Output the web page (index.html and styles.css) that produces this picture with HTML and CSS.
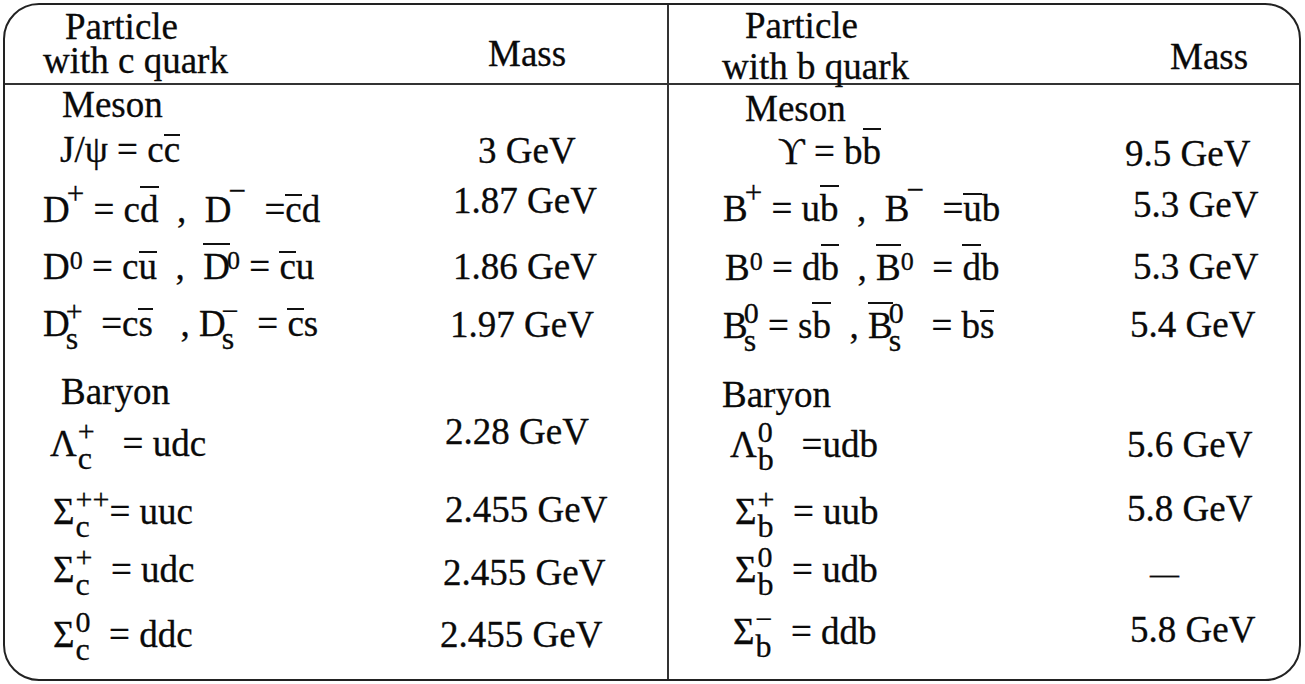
FILE: index.html
```html
<!DOCTYPE html>
<html>
<head>
<meta charset="utf-8">
<link rel="stylesheet" href="styles.css">
</head>
<body>
<div class="table">
  <section class="half left">
    <div class="head">
      <div class="hname"><span class="l1">Particle</span><span class="l2">with c quark</span></div>
      <div class="hmass">Mass</div>
    </div>
    <div class="body">
      <div class="row r0"><div class="f">Meson</div></div>
      <div class="row r1"><div class="f">J/ψ = c<span class="bar">c</span></div><div class="m">3 GeV</div></div>
      <div class="row r2"><div class="f">D<span class="sp">+</span> = c<span class="bar tall">d</span>&ensp;,&ensp;D<span class="sm">−</span>&ensp;=<span class="bar">c</span>d</div><div class="m">1.87 GeV</div></div>
      <div class="row r3"><div class="f">D<span class="s0">0</span> = c<span class="bar">u</span>&ensp;,&ensp;<span class="bar tall">D</span><span class="s0 tight">0</span> = <span class="bar">c</span>u</div><div class="m">1.86 GeV</div></div>
      <div class="row r4"><div class="f">D<span class="ss"><span class="up">+</span><span class="dn">s</span></span>&ensp;=c<span class="bar">s</span>&ensp;&nbsp;, D<span class="ss"><span class="up">−</span><span class="dn">s</span></span>&ensp;= <span class="bar">c</span>s</div><div class="m">1.97 GeV</div></div>
      <div class="row r5"><div class="f">Baryon</div></div>
      <div class="row r6"><div class="f">Λ<span class="ss greek"><span class="up">+</span><span class="dn">c</span></span>&ensp; = udc</div><div class="m">2.28 GeV</div></div>
      <div class="row r7"><div class="f">Σ<span class="ss greek"><span class="up">++</span><span class="dn">c</span></span>= uuc</div><div class="m">2.455 GeV</div></div>
      <div class="row r8"><div class="f">Σ<span class="ss greek"><span class="up">+</span><span class="dn">c</span></span>&ensp;= udc</div><div class="m">2.455 GeV</div></div>
      <div class="row r9"><div class="f">Σ<span class="ss greek"><span class="up">0</span><span class="dn">c</span></span>&ensp;= ddc</div><div class="m">2.455 GeV</div></div>
    </div>
  </section>
  <section class="half right">
    <div class="head">
      <div class="hname"><span class="l1">Particle</span><span class="l2">with b quark</span></div>
      <div class="hmass">Mass</div>
    </div>
    <div class="body">
      <div class="row r0"><div class="f">Meson</div></div>
      <div class="row r1"><div class="f">ϒ = b<span class="bar tall">b</span></div><div class="m">9.5 GeV</div></div>
      <div class="row r2"><div class="f">B<span class="sp">+</span> = u<span class="bar tall">b</span>&ensp;,&ensp;B<span class="sm">−</span>&ensp;=<span class="bar">u</span>b</div><div class="m">5.3 GeV</div></div>
      <div class="row r3"><div class="f">B<span class="s0">0</span> = d<span class="bar tall">b</span>&ensp;, <span class="bar tall">B</span><span class="s0">0</span>&ensp;= <span class="bar tall">d</span>b</div><div class="m">5.3 GeV</div></div>
      <div class="row r4"><div class="f">B<span class="ss"><span class="up">0</span><span class="dn">s</span></span> = s<span class="bar tall">b</span>&ensp;, <span class="bar tall">B</span><span class="ss"><span class="up">0</span><span class="dn">s</span></span>&ensp; = b<span class="bar">s</span></div><div class="m">5.4 GeV</div></div>
      <div class="row r5"><div class="f">Baryon</div></div>
      <div class="row r6"><div class="f">Λ<span class="ss greek"><span class="up">0</span><span class="dn">b</span></span>&ensp; =udb</div><div class="m">5.6 GeV</div></div>
      <div class="row r7"><div class="f">Σ<span class="ss greek"><span class="up">+</span><span class="dn">b</span></span>&ensp;= uub</div><div class="m">5.8 GeV</div></div>
      <div class="row r8"><div class="f">Σ<span class="ss greek"><span class="up">0</span><span class="dn">b</span></span>&ensp;= udb</div><div class="m dash">—</div></div>
      <div class="row r9"><div class="f">Σ<span class="ss greek"><span class="up">−</span><span class="dn">b</span></span>&ensp;= ddb</div><div class="m">5.8 GeV</div></div>
    </div>
  </section>
</div>
</body>
</html>
```

FILE: styles.css
```css
* { box-sizing: border-box; margin: 0; padding: 0; }
html, body { background: #fff; }
body {
  margin: 0;
  font-family: "Liberation Serif", "Times New Roman", serif;
  font-size: 37px;
  color: #0a0a0a;
  -webkit-text-stroke: 0.3px #0a0a0a;
}
.table {
  margin: 3px;
  width: 1298px;
  height: 678px;
  border: 2px solid #222;
  border-radius: 36px;
  display: grid;
  grid-template-columns: 664px 630px;
  overflow: hidden;
}
.half { display: flex; flex-direction: column; }
.left { border-right: 2px solid #333; }

.head {
  height: 80px;
  border-bottom: 2px solid #333;
  display: flex;
  flex: 0 0 auto;
}
.hname { flex: 0 0 400px; display: flex; flex-direction: column; }
.l1, .l2 { display: block; white-space: nowrap; }
.hmass { line-height: 34px; }
.left .hname { padding: 5px 0 0 38px; line-height: 34px; }
.left .l1 { padding-left: 22px; }
.left .hmass { padding: 32px 0 0 83px; }
.right .hname { padding: 0 0 0 53px; line-height: 41px; }
.right .l1 { padding-left: 23px; }
.right .hmass { padding: 35px 0 0 101px; }

.body { display: flex; flex-direction: column; }
.left .body { padding-top: 2px; }
.right .body { padding-top: 6px; }
.row { display: flex; align-items: flex-start; line-height: 36px; flex: 0 0 auto; white-space: nowrap; }
.f { flex: 0 0 400px; padding-left: var(--fx, 38px); }
.m { padding-left: var(--mx, 40px); margin-top: var(--my, 0px); }
.m.dash { font-size: 29px; }

/* left column rows (height = distance to next baseline) */
.left .r0 { height: 45px; --fx: 57px; }
.left .r1 { height: 59px; --fx: 55px; --mx: 73px; --my: 1px; }
.left .r2 { height: 58px; --fx: 38px; --mx: 48px; --my: -8px; }
.left .r3 { height: 57px; --fx: 38px; --mx: 48px; }
.left .r4 { height: 68px; --fx: 38px; --mx: 45px; --my: 1px; }
.left .r5 { height: 52px; --fx: 56px; }
.left .r6 { height: 68px; --fx: 45px; --mx: 40px; --my: -12px; }
.left .r7 { height: 58px; --fx: 48px; --mx: 40px; --my: -2px; }
.left .r8 { height: 65px; --fx: 48px; --mx: 38px; --my: 3px; }
.left .r9 { height: 40px; --fx: 48px; --mx: 35px; }

/* right column rows */
.right .r0 { height: 43px; --fx: 76px; }
.right .r1 { height: 56px; --fx: 109px; --mx: 56px; --my: 2px; }
.right .r2 { height: 60px; --fx: 54px; --mx: 64px; --my: -3px; }
.right .r3 { height: 58px; --fx: 56px; --mx: 64px; --my: -1px; }
.right .r4 { height: 69px; --fx: 54px; --mx: 61px; --my: -1px; }
.right .r5 { height: 50px; --fx: 53px; }
.right .r6 { height: 67px; --fx: 61px; --mx: 58px; }
.right .r7 { height: 58px; --fx: 66px; --mx: 58px; --my: -3px; }
.right .r8 { height: 62px; --fx: 66px; --mx: 81px; --my: 4px; }
.right .r9 { height: 40px; --fx: 64px; --mx: 61px; --my: -2px; }

/* overlined quark symbols */
.bar {
  display: inline-block;
  line-height: 28px;
  border-top: 2px solid #111;
}
.bar.tall {
  line-height: 44px;
  margin-top: -8px;
  margin-bottom: -6px;
}

/* single superscripts */
.sp, .sm { font-size: 31px; line-height: 0; }
.s0 { font-size: 26px; line-height: 0; }
.sp { vertical-align: 18px; margin-left: -3px; }
.sm { vertical-align: 21px; margin-left: -3px; }
.s0 { vertical-align: 10px; }
.s0.tight { margin-left: -3px; }

/* stacked super/subscripts */
.ss {
  display: inline-flex;
  flex-direction: column;
  align-items: flex-start;
  vertical-align: 15px;
  margin: -10px 0 -12px -4px;
}
.ss.greek { margin-left: 1px; }
.ss .up { font-size: 30px; line-height: 28px; }
.ss .dn { font-size: 32px; line-height: 26px; }
```
